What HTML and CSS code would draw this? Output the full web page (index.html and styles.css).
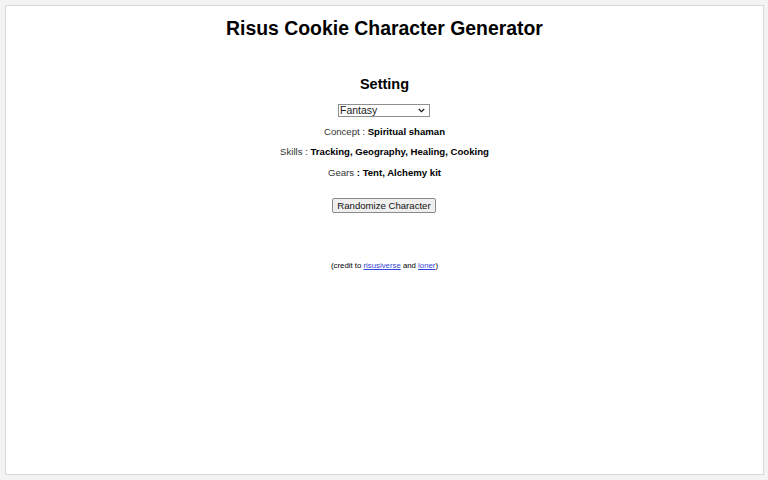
FILE: index.html
```html
<!DOCTYPE html>
<html>
<head>
<meta charset="utf-8">
<title>Risus Cookie Character Generator</title>
<link rel="stylesheet" href="styles.css">
</head>
<body>
<main class="sheet">
  <h1 class="title">Risus Cookie Character Generator</h1>
  <h2 class="setting-title">Setting</h2>
  <div class="select-wrap">
    <select class="setting-select">
      <option>Fantasy</option>
      <option>Sci-Fi</option>
      <option>Modern</option>
    </select>
    <svg class="chevron" width="7" height="5" viewBox="0 0 7 5"><path d="M0.8 1 L3.5 3.7 L6.2 1" fill="none" stroke="#222" stroke-width="1.3"/></svg>
  </div>
  <p class="line line-first">Concept : <b>Spiritual shaman</b></p>
  <p class="line">Skills : <b>Tracking, Geography, Healing, Cooking</b></p>
  <p class="line">Gears <b>: Tent, Alchemy kit</b></p>
  <button class="randomize">Randomize Character</button>
  <p class="credit">(credit to <a href="#">risusiverse</a> and <a href="#">loner</a>)</p>
</main>
</body>
</html>
```
FILE: styles.css
```css
html, body {
  margin: 0;
  padding: 0;
}
body {
  background: #f3f3f3;
  font-family: "Liberation Sans", Arial, sans-serif;
  padding: 5px 4px 5px 5px;
}
.sheet {
  background: #fff;
  border: 1px solid #d9d9d9;
  height: 470px;
  box-sizing: border-box;
  display: flex;
  flex-direction: column;
  align-items: center;
  text-align: center;
}
.title {
  font-size: 19.4px;
  line-height: 22px;
  font-weight: bold;
  margin: 11px 0 0;
  color: #000;
}
.setting-title {
  font-size: 14.5px;
  line-height: 17px;
  font-weight: bold;
  margin: 36.5px 0 0;
}
.select-wrap {
  position: relative;
  margin-top: 11.5px;
  height: 13px;
  margin-right: 1px;
}
.setting-select {
  appearance: none;
  -webkit-appearance: none;
  display: block;
  box-sizing: border-box;
  width: 92px;
  height: 13px;
  font-size: 10.5px;
  line-height: 11px;
  font-family: "Liberation Sans", Arial, sans-serif;
  padding: 0 0 0 1px;
  margin: 0;
  border: 1px solid #8f8f8f;
  border-radius: 0;
  background: #fff;
  color: #222;
}
.chevron {
  position: absolute;
  right: 5px;
  top: 4px;
  pointer-events: none;
}
.line {
  font-size: 9.6px;
  line-height: 11px;
  margin: 9.5px 0 0;
  color: #333;
}
.line-first {
  margin-top: 8.5px;
}
.line b {
  color: #000;
}
.randomize {
  margin-top: 20.5px;
  margin-right: 1px;
  font-size: 9.6px;
  font-family: "Liberation Sans", Arial, sans-serif;
  height: 15px;
  padding: 0 4px;
  color: #111;
  background: #efefef;
  border: 1px solid #8a8a8a;
  border-radius: 2px;
}
.credit {
  font-size: 7.8px;
  line-height: 9px;
  margin: 47.5px 0 0;
}
.credit a {
  color: #3344dd;
}
```
